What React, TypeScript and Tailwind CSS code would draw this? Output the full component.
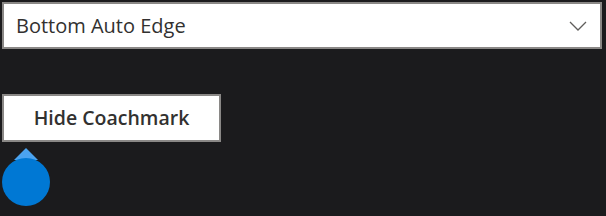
export default function App() {
  return (
    <div className="min-h-screen w-full bg-[#1b1b1d] p-[2px] font-['Open_Sans',sans-serif]">
      <div className="flex h-[47px] w-[600px] items-center justify-between border-2 border-[#8a8886] bg-white pl-3 pr-3">
        <span className="text-[20px] text-[#323130]">Bottom Auto Edge</span>
        <svg width="18" height="10" viewBox="0 0 18 10" className="mr-[1px]">
          <path d="M1 1 L9 9 L17 1" fill="none" stroke="#605e5c" strokeWidth="1.3" />
        </svg>
      </div>
      <div className="mt-[45px] flex h-[48px] w-[219px] items-center justify-center border-2 border-[#8a8886] bg-white">
        <span className="text-[19.5px] font-semibold text-[#323130]">Hide Coachmark</span>
      </div>
      <div className="relative mt-[5px] h-[60px] w-[48px]">
        <div className="absolute left-[12px] top-[1px] h-0 w-0 border-x-[12px] border-b-[12px] border-x-transparent border-b-[#4ba3f0]" />
        <div className="absolute left-0 top-[11px] h-[48px] w-[48px] rounded-full bg-[#0078d4]" />
      </div>
    </div>
  );
}
